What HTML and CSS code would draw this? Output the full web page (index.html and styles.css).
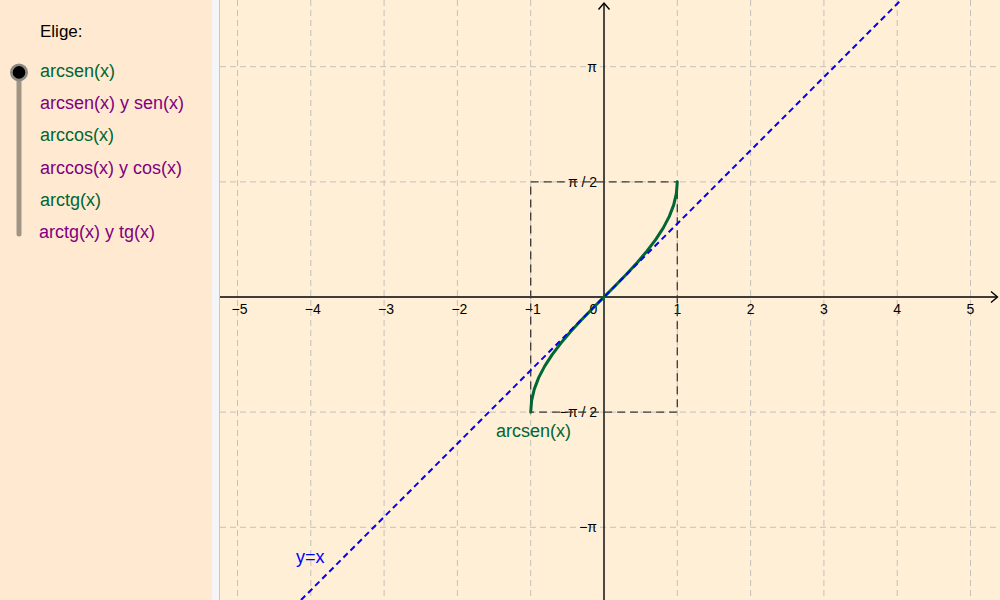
FILE: index.html
```html
<!DOCTYPE html>
<html lang="es">
<head>
<meta charset="utf-8">
<title>Funciones inversas</title>
<link rel="stylesheet" href="styles.css">
</head>
<body>
<div class="app">
  <aside class="panel">
    <div class="title">Elige:</div>
    <div class="chooser">
      <svg class="slider" width="40" height="194" viewBox="0 0 40 194">
        <line x1="19" y1="17" x2="19" y2="179" stroke="#a09585" stroke-width="5" stroke-linecap="round"/>
        <circle cx="19" cy="17.4" r="9" fill="#8c8882"/>
        <circle cx="19" cy="17.4" r="6.3" fill="#000"/>
      </svg>
      <ul class="options">
        <li class="opt green">arcsen(x)</li>
        <li class="opt purple">arcsen(x) y sen(x)</li>
        <li class="opt green">arccos(x)</li>
        <li class="opt purple">arccos(x) y cos(x)</li>
        <li class="opt green">arctg(x)</li>
        <li class="opt purple shift">arctg(x) y tg(x)</li>
      </ul>
    </div>
  </aside>
  <div class="divider"></div>
  <main class="graph">
    <svg class="plot" width="780" height="600" viewBox="0 0 780 600">
      <g stroke="#c4c0ba" stroke-width="1" stroke-dasharray="6 4" fill="none">
        <line x1="17.5" y1="0" x2="17.5" y2="600"/>
        <line x1="90.8" y1="0" x2="90.8" y2="600"/>
        <line x1="164.1" y1="0" x2="164.1" y2="600"/>
        <line x1="237.4" y1="0" x2="237.4" y2="600"/>
        <line x1="310.7" y1="0" x2="310.7" y2="600"/>
        <line x1="457.3" y1="0" x2="457.3" y2="600"/>
        <line x1="530.6" y1="0" x2="530.6" y2="600"/>
        <line x1="603.9" y1="0" x2="603.9" y2="600"/>
        <line x1="677.2" y1="0" x2="677.2" y2="600"/>
        <line x1="750.5" y1="0" x2="750.5" y2="600"/>
        <line x1="0" y1="66.7" x2="780" y2="66.7"/>
        <line x1="0" y1="181.9" x2="780" y2="181.9"/>
        <line x1="0" y1="412.1" x2="780" y2="412.1"/>
        <line x1="0" y1="527.3" x2="780" y2="527.3"/>
      </g>
      <g stroke="#000" stroke-width="1.4" fill="none">
        <line x1="0" y1="297" x2="777" y2="297"/>
        <polyline points="771,291.5 777.5,297 771,302.5"/>
        <line x1="384" y1="600" x2="384" y2="3"/>
        <polyline points="378.5,9.5 384,3 389.5,9.5"/>
      </g>
      <g font-family="'Liberation Sans', Arial, sans-serif" font-size="14" fill="#000" text-anchor="middle">
        <text x="19.5" y="313.5">−5</text>
        <text x="92.8" y="313.5">−4</text>
        <text x="166.1" y="313.5">−3</text>
        <text x="239.4" y="313.5">−2</text>
        <text x="312.7" y="313.5">−1</text>
        <text x="373.5" y="313.5">0</text>
        <text x="457.3" y="313.5">1</text>
        <text x="530.6" y="313.5">2</text>
        <text x="603.9" y="313.5">3</text>
        <text x="677.2" y="313.5">4</text>
        <text x="750.5" y="313.5">5</text>
      </g>
      <g font-family="'Liberation Sans', Arial, sans-serif" font-size="14" fill="#000" text-anchor="end">
        <text x="377" y="72">π</text>
        <text x="377" y="187">π / 2</text>
        <text x="377" y="417">−π / 2</text>
        <text x="377" y="532">−π</text>
      </g>
      <rect x="310.7" y="181.9" width="146.6" height="230.2" fill="none" stroke="#3a3a3a" stroke-width="1.3" stroke-dasharray="8 5"/>
      <path fill="none" stroke="#006633" stroke-width="3" stroke-linecap="round" stroke-linejoin="round"
        d="M310.70,412.14 L311.60,400.63 L314.29,389.11 L318.69,377.60 L324.70,366.08 L332.17,354.57 L340.92,343.06 L350.72,331.54 L361.35,320.03 L372.53,308.51 L384,297 L395.47,285.49 L406.65,273.97 L417.28,262.46 L427.08,250.94 L435.83,239.43 L443.30,227.92 L449.31,216.40 L453.71,204.89 L456.40,193.37 L457.30,181.86"/>
      <line x1="81" y1="600" x2="681" y2="0" stroke="#0000ff" stroke-width="2" stroke-dasharray="6 4"/>
      <text class="lbl" x="276" y="437" fill="#006633">arcsen(x)</text>
      <text class="lbl" x="76" y="563" fill="#0000ff">y=x</text>
    </svg>
  </main>
</div>
</body>
</html>
```
FILE: styles.css
```css
html, body {
  margin: 0;
  padding: 0;
  width: 1000px;
  height: 600px;
  overflow: hidden;
  font-family: "Liberation Sans", Arial, sans-serif;
}

.app {
  display: flex;
  width: 1000px;
  height: 600px;
}

.panel {
  width: 212px;
  flex: none;
  background: #ffe9d0;
  box-sizing: border-box;
  padding-top: 23px;
}

.title {
  font-size: 17px;
  line-height: 18px;
  color: #000;
  padding-left: 40px;
}

.chooser {
  display: flex;
  margin-top: 14px;
}

.slider {
  flex: none;
  display: block;
}

.options {
  list-style: none;
  margin: 0;
  padding: 0;
}

.opt {
  font-size: 18px;
  line-height: 32.2px;
  height: 32.2px;
  white-space: nowrap;
}

.opt.shift {
  margin-left: -1px;
}

.green {
  color: #006633;
}

.purple {
  color: #800080;
}

.divider {
  width: 7px;
  flex: none;
  background: #f5f5f8;
  border-right: 1px solid #c8c8cc;
}

.graph {
  flex: 1;
  background: #ffefd7;
  overflow: hidden;
}

.plot {
  display: block;
}

.lbl {
  font-family: "Liberation Sans", Arial, sans-serif;
  font-size: 18px;
}
```
